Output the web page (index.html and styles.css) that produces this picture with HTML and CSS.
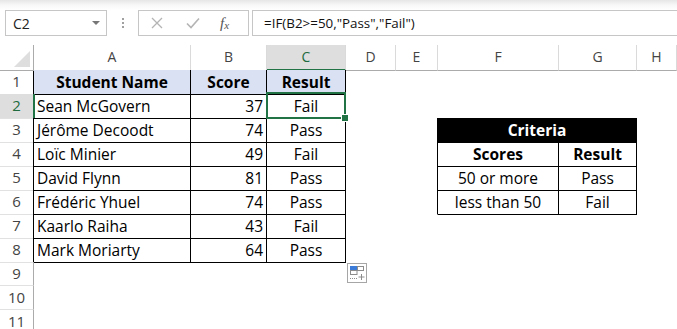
FILE: index.html
```html
<!DOCTYPE html>
<html>
<head>
<meta charset="utf-8">
<link rel="stylesheet" href="styles.css">
</head>
<body>
<div class="topbar">
  <div class="namebox"><span>C2</span><span class="caret"></span></div>
  <div class="dots"><i></i><i></i><i></i></div>
  <div class="fnbox">
    <svg class="ico-x" width="12" height="12" viewBox="0 0 12 12"><path d="M1 1L11 11M11 1L1 11" stroke="#b4b4b4" stroke-width="1.3" fill="none"/></svg>
    <svg class="ico-ok" width="14" height="12" viewBox="0 0 14 12"><path d="M1 6.5L5 10.5L13 1.5" stroke="#b4b4b4" stroke-width="1.6" fill="none"/></svg>
    <span class="fx">f<sub>x</sub></span>
  </div>
  <div class="formula">=IF(B2&gt;=50,"Pass","Fail")</div>
</div>

<div class="sheet">
  <div class="row hdr">
    <div class="ch corner"></div>
    <div class="ch tbb">A</div>
    <div class="ch tbb">B</div>
    <div class="ch selc">C</div>
    <div class="ch">D</div>
    <div class="ch">E</div>
    <div class="ch">F</div>
    <div class="ch">G</div>
    <div class="ch">H</div>
  </div>
  <div class="row">
    <div class="rh t">1</div>
    <div class="c tb th">Student Name</div>
    <div class="c tb th">Score</div>
    <div class="c tb th">Result</div>
    <div class="c"></div><div class="c"></div><div class="c"></div><div class="c"></div><div class="c"></div>
  </div>
  <div class="row">
    <div class="rh sel">2</div>
    <div class="c tb">Sean McGovern</div>
    <div class="c tb num">37</div>
    <div class="c tb mid active">Fail<span class="selbox"></span><span class="handle"></span></div>
    <div class="c"></div><div class="c"></div>
    <div class="c bb"></div><div class="c bb"></div>
    <div class="c"></div>
  </div>
  <div class="row">
    <div class="rh t">3</div>
    <div class="c tb">Jérôme Decoodt</div>
    <div class="c tb num">74</div>
    <div class="c tb mid">Pass</div>
    <div class="c"></div>
    <div class="c br"></div>
    <div class="c tb crit">Criteria</div>
    <div class="c"></div>
  </div>
  <div class="row">
    <div class="rh t">4</div>
    <div class="c tb">Loïc Minier</div>
    <div class="c tb num">49</div>
    <div class="c tb mid">Fail</div>
    <div class="c"></div>
    <div class="c br"></div>
    <div class="c tb mid bold">Scores</div>
    <div class="c tb mid bold">Result</div>
    <div class="c"></div>
  </div>
  <div class="row">
    <div class="rh t">5</div>
    <div class="c tb">David Flynn</div>
    <div class="c tb num">81</div>
    <div class="c tb mid">Pass</div>
    <div class="c"></div>
    <div class="c br"></div>
    <div class="c tb mid">50 or more</div>
    <div class="c tb mid">Pass</div>
    <div class="c"></div>
  </div>
  <div class="row">
    <div class="rh t">6</div>
    <div class="c tb">Frédéric Yhuel</div>
    <div class="c tb num">74</div>
    <div class="c tb mid">Pass</div>
    <div class="c"></div>
    <div class="c br"></div>
    <div class="c tb mid">less than 50</div>
    <div class="c tb mid">Fail</div>
    <div class="c"></div>
  </div>
  <div class="row">
    <div class="rh t">7</div>
    <div class="c tb">Kaarlo Raiha</div>
    <div class="c tb num">43</div>
    <div class="c tb mid">Fail</div>
    <div class="c"></div><div class="c"></div><div class="c"></div><div class="c"></div><div class="c"></div>
  </div>
  <div class="row">
    <div class="rh t">8</div>
    <div class="c tb">Mark Moriarty</div>
    <div class="c tb num">64</div>
    <div class="c tb mid">Pass</div>
    <div class="c"></div><div class="c"></div><div class="c"></div><div class="c"></div><div class="c"></div>
  </div>
  <div class="row">
    <div class="rh">9</div>
  </div>
  <div class="row">
    <div class="rh">10</div>
  </div>
  <div class="row">
    <div class="rh">11</div>
  </div>
</div>

<svg class="paste" width="20" height="20" viewBox="0 0 20 20">
  <rect x="0.5" y="0.5" width="19" height="19" fill="#fff" stroke="#a6a6a6"/>
  <rect x="3" y="3" width="7" height="4" fill="#3d7bd9"/>
  <rect x="10.5" y="3.5" width="6" height="4" fill="none" stroke="#8c8c8c"/>
  <rect x="3.5" y="7.5" width="6.5" height="4" fill="none" stroke="#8c8c8c"/>
  <path d="M3 15.5H10" stroke="#8c8c8c" stroke-dasharray="1 1"/>
  <path d="M14.5 11V17M11.5 14H17.5" stroke="#8c8c8c"/>
</svg>
</body>
</html>
```
FILE: styles.css
```css
* { box-sizing: border-box; margin: 0; padding: 0; }
body {
  width: 677px;
  height: 329px;
  overflow: hidden;
  background: #fff;
  position: relative;
  font-family: "Open Sans", "Liberation Sans", sans-serif;
}
.topbar {
  height: 45px;
  background: linear-gradient(#e6e6e6 0, #f7f7f7 5px, #fff 10px);
  display: flex;
  align-items: flex-start;
  padding: 10px 0 0 5px;
}
.namebox {
  width: 102px;
  height: 26px;
  border: 1px solid #c6c6c6;
  background: #fff;
  display: flex;
  align-items: center;
  justify-content: space-between;
  padding: 0 6px 0 7px;
  font: 14px "Open Sans", sans-serif;
  color: #222;
}
.caret {
  width: 0; height: 0;
  border-left: 4px solid transparent;
  border-right: 4px solid transparent;
  border-top: 4px solid #777;
}
.dots {
  width: 31px;
  height: 26px;
  display: flex;
  flex-direction: column;
  align-items: center;
  justify-content: center;
  gap: 2px;
}
.dots i { display: block; width: 2px; height: 2px; background: #a0a0a0; }
.fnbox {
  width: 111px;
  height: 26px;
  border: 1px solid #c6c6c6;
  background: #fff;
  display: flex;
  align-items: center;
  padding-left: 12px;
}
.ico-ok { margin-left: 23px; }
.fx {
  margin-left: 20px;
  font: italic 15px "Liberation Serif", serif;
  color: #555;
}
.fx sub { font-size: 11px; vertical-align: -1px; }
.formula {
  flex: 1;
  margin-left: 3px;
  height: 26px;
  border: 1px solid #c6c6c6;
  border-right: none;
  background: #fff;
  padding-left: 11px;
  font: 13.4px "Open Sans", sans-serif;
  line-height: 24px;
  color: #111;
}
.row {
  display: grid;
  grid-template-columns: 34px 157px 76px 79px 50px 42px 121px 78px 40px;
  height: 24px;
}
.row.hdr { height: 25px; }
.ch {
  border-right: 1px solid #dadada;
  border-bottom: 1px solid #ababab;
  font: 14px "Open Sans", sans-serif;
  color: #444;
  text-align: center;
  line-height: 24px;
}
.ch.corner { position: relative; border-right-color: #ababab; }
.ch.corner::after {
  content: "";
  position: absolute;
  right: 3px; bottom: 3px;
  width: 16px; height: 16px;
  background: #dedede;
  clip-path: polygon(100% 0, 100% 100%, 0 100%);
}
.ch.tbb { border-bottom-color: #000; }
.ch.selc {
  background: #dedede;
  color: #1d6b3f;
  border-bottom: 2px solid #217346;
}
.rh {
  border-right: 1px solid #ababab;
  border-bottom: 1px solid #e1e1e1;
  font: 15px "Open Sans", sans-serif;
  color: #444;
  text-align: center;
  line-height: 23px;
}
.rh.t { border-right-color: #000; }
.rh.sel {
  background: #dedede;
  color: #1d6b3f;
  border-right-color: #217346;
  box-shadow: 1px 0 0 #217346;
}
.c {
  border-right: 1px solid transparent;
  border-bottom: 1px solid transparent;
  font-size: 15.5px;
  line-height: 24px;
  padding: 0 3px;
  color: #000;
  white-space: nowrap;
}
.c.tb { border-right-color: #000; border-bottom-color: #000; }
.c.br { border-right-color: #000; }
.c.bb { border-bottom-color: #000; }
.c.th { background: #d9e1f2; font-weight: 700; text-align: center; }
.c.num { text-align: right; }
.c.mid { text-align: center; }
.c.bold { font-weight: 700; }
.c.crit {
  grid-column: span 2;
  background: #000;
  color: #fff;
  font-weight: 700;
  text-align: center;
}
.c.active { position: relative; }
.selbox {
  position: absolute;
  top: -2px; left: -1px; right: -1px; bottom: -1px;
  border: 2px solid #217346;
}
.handle {
  position: absolute;
  right: -3px; bottom: -3px;
  width: 6px; height: 6px;
  background: #217346;
  box-shadow: 0 0 0 1px #fff;
}
.paste {
  position: absolute;
  left: 347px;
  top: 263px;
}
```
